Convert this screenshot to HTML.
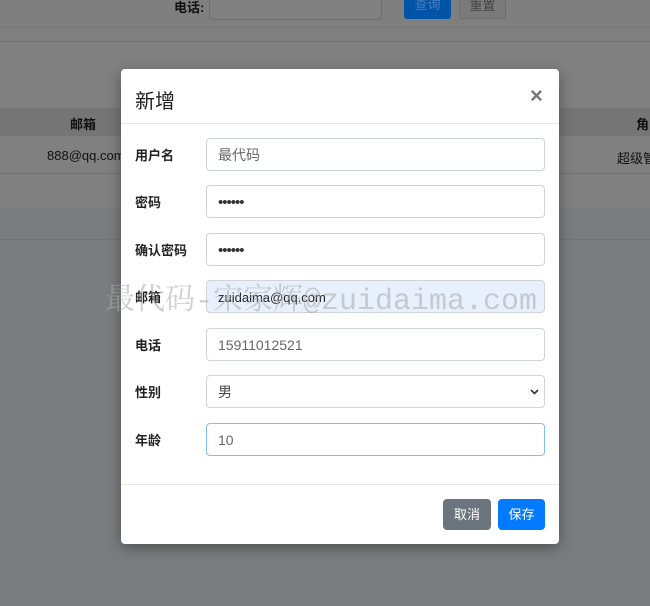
<!DOCTYPE html>
<html><head><meta charset="utf-8"><style>
*{box-sizing:border-box;margin:0;padding:0}
body{width:650px;height:606px;overflow:hidden;position:relative;background:#7b7c7f;font-family:"Liberation Sans","Noto Sans CJK SC",sans-serif;font-size:14px}
.abs{position:absolute;white-space:nowrap}
.top{left:0;top:0;width:650px;height:207px;background:#808080}
.modal{left:121px;top:69px;width:438px;height:475px;background:#fff;border-radius:4px;box-shadow:0 4px 14px rgba(0,0,0,.35)}
.lbl{position:absolute;left:14px;font-size:13px;font-weight:bold;color:#222}
.inp{position:absolute;left:85px;width:339px;height:33px;border:1px solid #ced4da;border-radius:4px;padding-left:11px;line-height:33px;font-size:14px;color:#666}
</style></head><body>
<div class="abs top"></div>
<div class="abs" style="left:0;top:0;width:650px;height:28px;background:#7f7f7f;border-bottom:1px solid #777"></div>
<div class="abs" style="left:174px;top:-3px;font-weight:bold;font-size:13px;color:#111">电话:</div>
<div class="abs" style="left:209px;top:-2px;width:173px;height:22px;border:1px solid #6e6e6e;border-radius:4px;background:#808080"></div>
<div class="abs" style="left:404px;top:-2px;width:47px;height:21px;background:#0054a8;border-radius:3px;color:#4a7cc0;text-align:center;font-size:13px;line-height:14px">查询</div>
<div class="abs" style="left:459px;top:-2px;width:47px;height:21px;background:#7a7a7a;border:1px solid #6e6e6e;border-radius:3px;color:#444;text-align:center;font-size:13px;line-height:14px">重置</div>
<div class="abs" style="left:0;top:41px;width:650px;height:1px;background:#737373"></div>
<div class="abs" style="left:0;top:108px;width:650px;height:28px;background:#757575"></div>
<div class="abs" style="left:70px;top:114px;font-weight:bold;font-size:13px;color:#111">邮箱</div>
<div class="abs" style="left:636px;top:114px;font-weight:bold;font-size:13px;color:#111">角</div>
<div class="abs" style="left:47px;top:148px;font-size:13px;color:#111">888@qq.com</div>
<div class="abs" style="left:617px;top:148px;font-size:13px;color:#111">超级管</div>
<div class="abs" style="left:0;top:173px;width:650px;height:1px;background:#737373"></div>
<div class="abs" style="left:0;top:239px;width:650px;height:1px;background:#737373"></div>

<div class="abs modal">
 <div class="abs" style="left:14px;top:16px;font-size:20px;color:#222">新增</div>
 <div class="abs" style="left:409px;top:14px;font-size:22px;color:#777;font-weight:bold">×</div>
 <div class="abs" style="left:0;top:54px;width:438px;height:1px;background:#e5e5e5"></div>
 <div class="lbl" style="top:76px">用户名</div><div class="inp" style="top:69px">最代码</div>
 <div class="lbl" style="top:123px">密码</div><div class="inp" style="top:116px;color:#333;font-size:15px;letter-spacing:-1px">••••••</div>
 <div class="lbl" style="top:171px">确认密码</div><div class="inp" style="top:164px;color:#333;font-size:15px;letter-spacing:-1px">••••••</div>
 <div class="lbl" style="top:218px">邮箱</div><div class="inp" style="top:211px;background:#e8f0fe;color:#222;font-size:13px">zuidaima@qq.com</div>
 <div class="lbl" style="top:266px">电话</div><div class="inp" style="top:259px">15911012521</div>
 <div class="lbl" style="top:313px">性别</div><div class="inp" style="top:306px;color:#444">男<svg style="position:absolute;right:5px;top:13px" width="9" height="6" viewBox="0 0 9 6"><path d="M1 1l3.5 3.5L8 1" fill="none" stroke="#333" stroke-width="1.6"/></svg></div>
 <div class="lbl" style="top:361px">年龄</div><div class="inp" style="top:354px;border-color:#80bdff">10</div>
 <div class="abs" style="left:0;top:415px;width:438px;height:1px;background:#e5e5e5"></div>
 <div class="abs" style="left:322px;top:430px;width:48px;height:31px;background:#6c757d;border-radius:4px;color:#fff;text-align:center;line-height:31px;font-size:13px">取消</div>
 <div class="abs" style="left:377px;top:430px;width:47px;height:31px;background:#007bff;border-radius:4px;color:#fff;text-align:center;line-height:31px;font-size:13px">保存</div>
</div>
<div class="abs" style="left:105px;top:274px;font-family:'Liberation Mono','Noto Serif CJK SC',monospace;font-size:30px;color:rgba(170,170,170,.55)">最代码-宋家辉@zuidaima.com</div>
</body></html>
